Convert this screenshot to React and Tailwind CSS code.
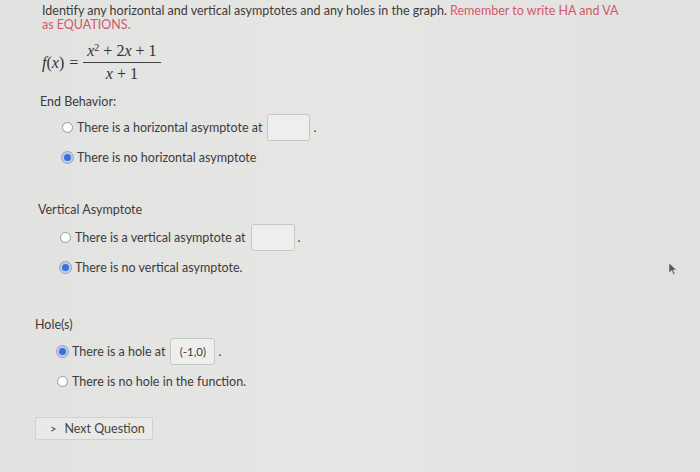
import React from 'react';

const Radio = ({ checked }) => (
  <span
    className={`inline-block w-[11px] h-[11px] rounded-full shrink-0 ${
      checked
        ? 'bg-[#3d6fd6] border-[2.5px] border-[#b9cdf2] ring-1 ring-[#9aa6bb]'
        : 'bg-white border border-[#9a9a9a]'
    }`}
  />
);

const Box = ({ value, className = '' }) => (
  <span
    className={`inline-flex items-center justify-center h-[27px] border border-[#c6c6c6] rounded-[3px] bg-[#eeeeed] text-[11.5px] ${className}`}
  >
    {value}
  </span>
);

const Option = ({ checked, children }) => (
  <div className="flex items-center gap-[4px] h-[30px]">
    <Radio checked={checked} />
    <span className="flex items-center">{children}</span>
  </div>
);

export default function App() {
  return (
    <div
      className="relative w-[700px] h-[472px] overflow-hidden bg-gradient-to-r from-[#e2e2e0] via-[#e6e6e4] to-[#e1e2e0] text-[#3c3c3c] text-[12.5px] leading-[13px]"
      style={{ fontFamily: 'Lato, "Open Sans", sans-serif' }}
    >
      <div className="pt-[4px] pl-[42px]">
        <p>
          Identify any horizontal and vertical asymptotes and any holes in the graph.{' '}
          <span className="text-[#d2586b]">Remember to write HA and VA</span>
        </p>
        <p className="text-[#d2586b] mt-[1px]">as EQUATIONS.</p>

        {/* formula */}
        <div
          className="flex items-center mt-[12px] text-[16px] leading-[16px] text-[#333]"
          style={{ fontFamily: '"Liberation Serif", serif' }}
        >
          <span>
            <i>f</i>(<i>x</i>)
          </span>
          <span className="mx-[5px]">=</span>
          <span className="flex flex-col items-center">
            <span className="px-[4px] pb-[3px]">
              <i>x</i>
              <sup className="text-[10px]">2</sup> + 2<i>x</i> + 1
            </span>
            <span className="w-full border-t border-[#444]" />
            <span className="pt-[3px]">
              <i>x</i> + 1
            </span>
          </span>
        </div>
      </div>

      {/* End behavior */}
      <div className="pl-[40px] mt-[13px]">
        <p>End Behavior:</p>
        <div className="pl-[22px] mt-[4px]">
          <Option>
            There is a horizontal asymptote at
            <Box value="" className="w-[43px] ml-[5px]" />
            <span className="ml-[3px]">.</span>
          </Option>
          <Option checked>There is no horizontal asymptote</Option>
        </div>
      </div>

      {/* Vertical */}
      <div className="pl-[38px] mt-[31px]">
        <p>Vertical Asymptote</p>
        <div className="pl-[22px] mt-[6px]">
          <Option>
            There is a vertical asymptote at
            <Box value="" className="w-[44px] ml-[5px]" />
            <span className="ml-[3px]">.</span>
          </Option>
          <Option checked>There is no vertical asymptote.</Option>
        </div>
      </div>

      {/* Holes */}
      <div className="pl-[35px] mt-[36px]">
        <p>Hole(s)</p>
        <div className="pl-[22px] mt-[5px]">
          <Option checked>
            There is a hole at
            <Box value="(-1,0)" className="w-[45px] ml-[5px]" />
            <span className="ml-[3px]">.</span>
          </Option>
          <Option>There is no hole in the function.</Option>
        </div>
        <button className="mt-[21px] w-[118px] h-[23px] flex items-center gap-[8px] pl-[14px] border border-[#d0d0d0] rounded-[2px] bg-[#e9e9e8] text-[12.5px] text-[#444]">
          <span className="text-[11px]">&gt;</span>
          Next Question
        </button>
      </div>

      {/* mouse pointer */}
      <svg className="absolute left-[668px] top-[262px]" width="10" height="14" viewBox="0 0 10 14">
        <path d="M1 1 L1 11 L3.5 8.5 L5.5 12.5 L7 11.8 L5 8 L8.5 8 Z" fill="#555" stroke="#ddd" strokeWidth="0.6" />
      </svg>
    </div>
  );
}
